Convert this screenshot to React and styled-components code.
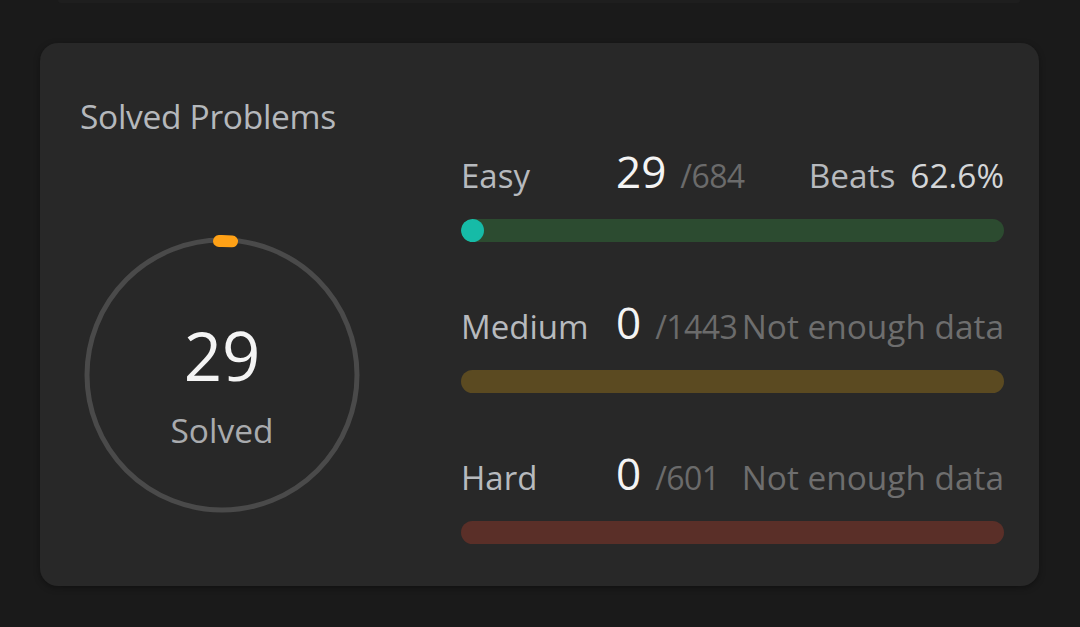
import React from 'react';
import styled, { createGlobalStyle } from 'styled-components';

const GlobalStyle = createGlobalStyle`
  html, body {
    margin: 0;
    padding: 0;
    background: #1a1a1a;
  }
  body {
    font-family: "Open Sans", "Noto Sans", sans-serif;
    -webkit-font-smoothing: antialiased;
  }
`;

const Page = styled.div`
  width: 1080px;
  height: 627px;
  padding-left: 40px;
  box-sizing: border-box;
  overflow: hidden;
`;

const PrevCard = styled.div`
  height: 3px;
  width: 962px;
  margin-left: 18px;
  background: #1e1e1e;
  border-radius: 0 0 12px 12px;
`;

const Card = styled.section`
  margin-top: 40px;
  width: 999px;
  height: 543px;
  box-sizing: border-box;
  background: #282828;
  border-radius: 18px;
  box-shadow: 0 2px 6px rgba(0, 0, 0, 0.35);
  display: grid;
  grid-template-columns: 421px 1fr;
  padding: 51px 35px 0 0;
`;

const LeftCol = styled.div`
  display: flex;
  flex-direction: column;
  padding-left: 40px;
`;

const Title = styled.h2`
  margin: 0;
  font-size: 33.5px;
  line-height: 44px;
  font-weight: 400;
  letter-spacing: -0.3px;
  color: #b5b8bc;
`;

const Ring = styled.div`
  display: grid;
  width: 290px;
  height: 290px;
  margin: 92px 0 0 -3px;
  & > * {
    grid-area: 1 / 1;
  }
`;

const RingCenter = styled.div`
  display: flex;
  flex-direction: column;
  align-items: center;
  justify-content: center;
  padding-top: 22px;
`;

const RingNumber = styled.div`
  font-size: 67px;
  line-height: 70px;
  color: #f4f4f4;
`;

const RingLabel = styled.div`
  font-size: 33.5px;
  line-height: 44px;
  margin-top: 18px;
  color: #a9abae;
`;

const RightCol = styled.div`
  display: flex;
  flex-direction: column;
  gap: 58px;
  padding-top: 55px;
`;

const Row = styled.div`
  display: flex;
  flex-direction: column;
  gap: 26px;
`;

const Header = styled.div`
  display: flex;
  align-items: baseline;
  height: 44px;
  line-height: 44px;
  white-space: nowrap;
`;

const Level = styled.span`
  width: 155px;
  font-size: 33px;
  color: #b7babe;
`;

const Count = styled.span`
  font-size: 44px;
  color: #f4f4f4;
`;

const Total = styled.span`
  font-size: 32px;
  color: #6b6b6b;
  margin-left: 14px;
  letter-spacing: -0.6px;
  vertical-align: 8px;
`;

const Side = styled.span`
  margin-left: auto;
  font-size: 33.4px;
  color: ${p => (p.$muted ? '#6e6e6e' : '#b7babe')};
`;

const Percent = styled.span`
  margin-left: 15px;
  color: #d4d6d8;
`;

const Track = styled.div`
  height: 23px;
  border-radius: 12px;
  background: ${p => p.$track};
  overflow: hidden;
`;

const Fill = styled.div`
  height: 100%;
  min-width: 23px;
  border-radius: 12px;
  background: ${p => p.$color};
`;

const levels = [
  { name: 'Easy', solved: 29, total: 684, beats: '62.6%', track: '#2c4b30', color: '#16bba7' },
  { name: 'Medium', solved: 0, total: 1443, track: '#5b4a21', color: '#ffb800' },
  { name: 'Hard', solved: 0, total: 601, track: '#5a2f28', color: '#ef4743' },
];

const ProgressRing = () => (
  <svg width="290" height="290" viewBox="0 0 290 290">
    <circle cx="145" cy="145" r="135" fill="none" stroke="#4a4a4a" strokeWidth="5" />
    <path
      d="M 142 11.03 A 135 135 0 0 1 155 11.37"
      fill="none"
      stroke="#ffa116"
      strokeWidth="12"
      strokeLinecap="round"
    />
  </svg>
);

export default function App() {
  const solved = levels.reduce((s, l) => s + l.solved, 0);
  return (
    <Page>
      <GlobalStyle />
      <PrevCard />
      <Card>
        <LeftCol>
          <Title>Solved Problems</Title>
          <Ring>
            <ProgressRing />
            <RingCenter>
              <RingNumber>{solved}</RingNumber>
              <RingLabel>Solved</RingLabel>
            </RingCenter>
          </Ring>
        </LeftCol>
        <RightCol>
          {levels.map(l => (
            <Row key={l.name}>
              <Header>
                <Level>{l.name}</Level>
                <Count>{l.solved}</Count>
                <Total>/{l.total}</Total>
                {l.beats ? (
                  <Side>
                    Beats<Percent>{l.beats}</Percent>
                  </Side>
                ) : (
                  <Side $muted>Not enough data</Side>
                )}
              </Header>
              <Track $track={l.track}>
                {l.solved > 0 && (
                  <Fill $color={l.color} style={{ width: `${(l.solved / l.total) * 100}%` }} />
                )}
              </Track>
            </Row>
          ))}
        </RightCol>
      </Card>
    </Page>
  );
}
